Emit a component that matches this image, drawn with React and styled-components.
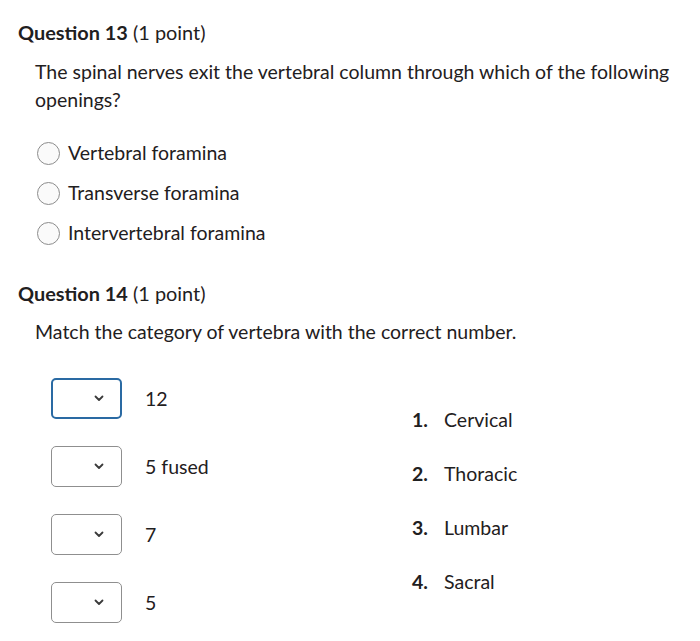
import React from 'react'
import styled, { createGlobalStyle } from 'styled-components'

const GlobalStyle = createGlobalStyle`
    body{
        margin: 0;
        background: #fff;
        font-family: Lato, "Open Sans", sans-serif;
        color: #1f2021;
    }
`

const Page = styled.div`
    padding: 18px 18px 0 18px;
`

const Question = styled.section`
    margin-bottom: ${ ( { gap } ) => gap || 0 }px;
`

const Heading = styled.h2`
    margin: 0;
    font-size: 19.9px;
    font-weight: 400;
    line-height: 28px;

    & > b{
        font-weight: 700;
    }
`

const Prompt = styled.p`
    margin: ${ ( { top } ) => top }px 0 0 17px;
    font-size: 19.5px;
    line-height: 28px;
`

const Options = styled.div`
    display: flex;
    flex-direction: column;
    gap: 12px;
    margin: 25px 0 0 19px;
`

const Option = styled.label`
    display: flex;
    align-items: center;
    gap: 8px;
    font-size: 19.5px;
    line-height: 28px;
`

const Radio = styled.span`
    width: 21px;
    height: 21px;
    border-radius: 50%;
    border: 1px solid #8c8c8c;
    background: #fafafa;
`

const MatchArea = styled.div`
    display: flex;
    align-items: center;
    margin: 32px 0 0 33px;
`

const LeftCol = styled.div`
    display: flex;
    flex-direction: column;
    gap: 27px;
    width: 361px;
`

const MatchRow = styled.div`
    display: flex;
    align-items: center;
    gap: 23px;
    font-size: 19.5px;
`

const Select = styled.div`
    width: 71px;
    height: 41px;
    box-sizing: border-box;
    border: ${ ( { focused } ) => focused ? '2px solid #2a6aa3' : '1px solid #8f8f8f' };
    border-radius: 5px;
    display: flex;
    align-items: center;
    justify-content: flex-end;
    padding-right: ${ ( { focused } ) => focused ? 16 : 17 }px;
`

const RightCol = styled.ol`
    list-style: none;
    margin: 0;
    padding: 0;
    display: flex;
    flex-direction: column;
    gap: 26px;
`

const Item = styled.li`
    display: flex;
    font-size: 19.5px;
    line-height: 28px;

    & > b{
        width: 32px;
        font-weight: 700;
    }
`

const Chevron = () => (
    <svg width="10" height="7" viewBox="0 0 10 7">
        <path d="M1.5 1.5 L5 5 L8.5 1.5" fill="none" stroke="#3a3a3a" strokeWidth="1.8" strokeLinecap="round" strokeLinejoin="round" />
    </svg>
)

const options = [ 'Vertebral foramina', 'Transverse foramina', 'Intervertebral foramina' ]
const matches = [ '12', '5 fused', '7', '5' ]
const categories = [ 'Cervical', 'Thoracic', 'Lumbar', 'Sacral' ]

export default function App() {
    return (
        <Page>
            <GlobalStyle />
            <Question gap={ 32 }>
                <Heading><b>Question 13</b> (1 point)</Heading>
                <Prompt top={ 12 }>The spinal nerves exit the vertebral column through which of the following openings?</Prompt>
                <Options>
                    { options.map( ( o ) => (
                        <Option key={ o }><Radio />{ o }</Option>
                    ) ) }
                </Options>
            </Question>
            <Question>
                <Heading><b>Question 14</b> (1 point)</Heading>
                <Prompt top={ 11 }>Match the category of vertebra with the correct number.</Prompt>
                <MatchArea>
                    <LeftCol>
                        { matches.map( ( m, i ) => (
                            <MatchRow key={ m }>
                                <Select focused={ i === 0 }><Chevron /></Select>
                                { m }
                            </MatchRow>
                        ) ) }
                    </LeftCol>
                    <RightCol>
                        { categories.map( ( c, i ) => (
                            <Item key={ c }><b>{ i + 1 }.</b>{ c }</Item>
                        ) ) }
                    </RightCol>
                </MatchArea>
            </Question>
        </Page>
    )
}
